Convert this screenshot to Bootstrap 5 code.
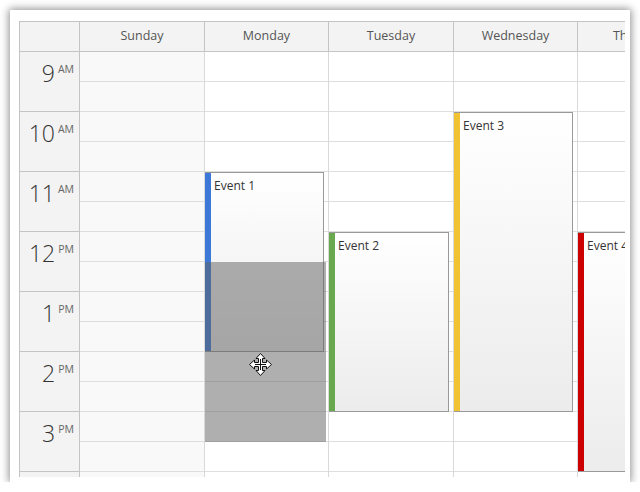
<!DOCTYPE html>
<html lang="en">
<head>
    <meta charset="UTF-8">
    <meta name="viewport" content="width=device-width, initial-scale=1.0">
    <title>Calendar</title>
    <link href="https://cdn.jsdelivr.net/npm/bootstrap@5.3.0/dist/css/bootstrap.min.css" rel="stylesheet">
    <style>
        body {
            background-color: #fff;
            font-family: "Open Sans", "Liberation Sans", sans-serif;
            color: #333;
            overflow: hidden;
        }
        .shot-window {
            width: 620px;
            height: 472px;
            margin: 10px 0 0 10px;
            padding: 11px 5px 5px 9px;
            background-color: #fff;
            box-shadow: 0 0 8px 1px rgba(0,0,0,.45);
        }
        .cal-clip {
            width: 606px;
            height: 456px;
            overflow: hidden;
            position: relative;
            border-top: 1px solid #c4c4c4;
            border-left: 1px solid #c4c4c4;
        }
        .cal-grid {
            display: grid;
            grid-template-columns: 60px 125px 124px 125px 124px 125px;
            width: 683px;
        }
        .cal-head {
            height: 30px;
            background-color: #f3f3f3;
            border-right: 1px solid #c4c4c4;
            border-bottom: 1px solid #c4c4c4;
            font-size: 12.5px;
            color: #555;
        }
        .time-cell {
            height: 60px;
            background-color: #f3f3f3;
            border-right: 1px solid #c4c4c4;
            border-bottom: 1px solid #c4c4c4;
            padding: 4px 5px 0 0;
            text-align: right;
            line-height: 26px;
            color: #333;
        }
        .time-hour { font-size: 23px; font-weight: 300; }
        .time-ampm { font-size: 10.5px; color: #666; vertical-align: 9px; margin-left: 3px; }
        .day-col { border-right: 1px solid #d9d9d9; }
        .day-off { background-color: #f9f9f9; }
        .half-cell { height: 30px; border-bottom: 1px solid #dedede; }
        .cal-event {
            position: absolute;
            background: linear-gradient(#fff, #ececec);
            border: 1px solid #999;
            border-left: 0;
            padding: 5px 0 0 9px;
            font-size: 12px;
            line-height: 16px;
            white-space: nowrap;
            overflow: hidden;
            color: #333;
        }
        .event-bar { position: absolute; left: 0; top: -1px; bottom: -1px; width: 6px; }
        .move-shadow {
            position: absolute;
            left: 185px;
            top: 240px;
            width: 121px;
            height: 180px;
            background-color: rgba(96,96,96,.5);
        }
        .move-cursor { position: absolute; left: 228px; top: 330px; width: 25px; height: 25px; }
    </style>
</head>
<body>

<div class="shot-window">
    <div class="cal-clip">
        <div class="cal-grid" id="cal-grid"></div>
        <div class="cal-event" style="left:185px;top:150px;width:119px;height:180px"><span class="event-bar" style="background:#3c78d8"></span>Event 1</div>
        <div class="cal-event" style="left:309px;top:210px;width:120px;height:180px"><span class="event-bar" style="background:#6aa84f"></span>Event 2</div>
        <div class="cal-event" style="left:434px;top:90px;width:119px;height:300px"><span class="event-bar" style="background:#f1c232"></span>Event 3</div>
        <div class="cal-event" style="left:558px;top:210px;width:119px;height:240px"><span class="event-bar" style="background:#cc0000"></span>Event 4</div>
        <div class="move-shadow"></div>
        <svg class="move-cursor" viewBox="0 0 25 25">
            <path d="M12.500 1.500 17 6.500H14.500V10.500H18.500V8L23.500 12.500 18.500 17V14.500H14.500V18.500H17L12.500 23.500 8 18.500H10.500V14.500H6.500V17L1.500 12.500 6.500 8V10.500H10.500V6.500H8Z" fill="#fff" stroke="#111" stroke-width="1"/>
            <path d="M12.500 7V18M7 12.500H18" stroke="#111" stroke-width="1" fill="none"/>
        </svg>
    </div>
</div>

<script src="https://cdn.jsdelivr.net/npm/bootstrap@5.3.0/dist/js/bootstrap.bundle.min.js"></script>
<script>
const days = ["Sunday", "Monday", "Tuesday", "Wednesday", "Thursday"];
const hours = [["9", "AM"], ["10", "AM"], ["11", "AM"], ["12", "PM"], ["1", "PM"], ["2", "PM"], ["3", "PM"]];
const grid = document.getElementById("cal-grid");

function addDiv(className, html) {
  const div = document.createElement("div");
  div.className = className;
  div.innerHTML = html || "";
  grid.appendChild(div);
  return div;
}

addDiv("cal-head");
days.forEach(d => addDiv("cal-head d-flex align-items-center justify-content-center", d));

const timeCol = addDiv("");
hours.forEach(h => {
  timeCol.innerHTML += `<div class="time-cell"><span class="time-hour">${h[0]}</span><span class="time-ampm">${h[1]}</span></div>`;
});
// the next hour row starts right at the clipped bottom edge, no label visible
timeCol.innerHTML += '<div class="time-cell"></div>';

days.forEach((d, i) => {
  const col = addDiv("day-col" + (i === 0 ? " day-off" : ""));
  for (let n = 0; n < (hours.length + 1) * 2; n++) {
    col.innerHTML += '<div class="half-cell"></div>';
  }
});
</script>

</body>
</html>
